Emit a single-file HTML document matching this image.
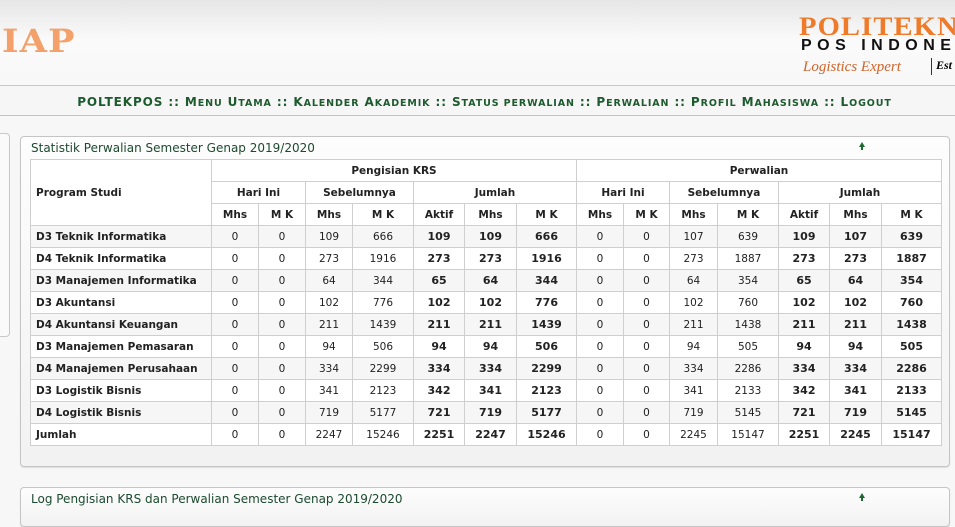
<!DOCTYPE html>
<html><head><meta charset="utf-8"><style>
*{margin:0;padding:0;box-sizing:border-box}
body{width:955px;height:501px;overflow:hidden;background:#f7f7f7;font-family:"DejaVu Sans","Liberation Sans",sans-serif;position:relative}
.hdr{position:absolute;left:0;top:0;width:955px;height:86px;background:linear-gradient(#e6e6e6 0,#ececec 12px,#fafafa 40px,#f8f8f8 86px);border-bottom:1px solid #c8c8c8}
.iap{position:absolute;left:2px;top:22px;font-family:"DejaVu Serif",serif;font-weight:bold;font-size:32px;color:#f4a06a;letter-spacing:1px;transform:scaleX(1.1);transform-origin:left}
.pol{position:absolute;left:799px;top:12px;font-family:"Liberation Serif",serif;font-weight:bold;font-size:26px;color:#ee7a2a;letter-spacing:1px;white-space:nowrap;transform:scaleX(1.1);transform-origin:left}
.pos{position:absolute;left:801px;top:37px;font-family:"Liberation Sans",sans-serif;font-weight:bold;font-size:16px;color:#111;letter-spacing:5.5px;white-space:nowrap}
.le{position:absolute;left:803px;top:59px;font-family:"Liberation Serif",serif;font-style:italic;font-size:15px;color:#d0642a;white-space:nowrap}
.est{position:absolute;left:931px;top:58px;border-left:1px solid #333;padding-left:4px;font-family:"Liberation Serif",serif;font-style:italic;font-size:12px;height:17px;font-weight:bold}
.nav{position:absolute;left:0;top:87px;width:955px;height:29px;background:#f6f6f6;border-bottom:1px solid #c4c4c4;text-align:center;font-size:12px;font-weight:bold;color:#1d5a2e;line-height:30px;letter-spacing:0.9px;padding-left:14px;white-space:nowrap}
.nav small{font-size:9.5px}
.lp{position:absolute;left:-5px;top:133px;width:15px;height:204px;border:1px solid #c8c8c8;border-radius:4px;background:#fafafa}
.panel{position:absolute;left:20px;width:930px;border:1px solid #c5c5c5;border-radius:4px;background:linear-gradient(#fdfdfd,#f2f2f2);box-shadow:0 1px 1px #ddd}
.ttl{position:absolute;left:10px;top:4px;font-size:12px;color:#1d4a30}
.arr{position:absolute;left:838px;top:5px;width:0;height:0;border-left:3px solid transparent;border-right:3px solid transparent;border-bottom:5px solid #1d6a2e}
.arr:after{content:"";position:absolute;left:-1px;top:5px;width:2px;height:3px;background:#1d6a2e}
table{position:absolute;left:9px;top:22px;border-collapse:collapse;font-size:10.5px;color:#222;background:#fff}
td,th{border:1px solid #cfcfcf;height:22px;text-align:center;padding:0}
th{font-weight:bold;font-size:10.5px}
td.p{text-align:left;padding-left:5px;font-weight:bold}
tbody tr:nth-child(odd){background:#f6f6f6}
td.b{font-weight:bold;font-size:11px}
</style></head><body>
<div class="hdr">
<div class="iap">IAP</div>
<div class="pol">POLITEKNIK</div>
<div class="pos">POS INDONESIA</div>
<div class="le">Logistics Expert</div>
<div class="est">Est</div>
</div>
<div class="nav">POLTEKPOS :: M<small>ENU</small> U<small>TAMA</small> :: K<small>ALENDER</small> A<small>KADEMIK</small> :: S<small>TATUS PERWALIAN</small> :: P<small>ERWALIAN</small> :: P<small>ROFIL</small> M<small>AHASISWA</small> :: L<small>OGOUT</small></div>
<div class="lp"></div>
<div class="panel" style="top:136px;height:331px">
<div class="ttl">Statistik Perwalian Semester Genap 2019/2020</div>
<div class="arr"></div>
<table>
<colgroup><col style="width:181px"><col style="width:47px"><col style="width:47px"><col style="width:47px"><col style="width:61px"><col style="width:51px"><col style="width:52px"><col style="width:60px"><col style="width:47px"><col style="width:46px"><col style="width:48px"><col style="width:61px"><col style="width:51px"><col style="width:52px"><col style="width:60px"></colgroup>
<thead>
<tr><th rowspan="3" style="text-align:left;padding-left:5px">Program Studi</th><th colspan="7">Pengisian KRS</th><th colspan="7">Perwalian</th></tr>
<tr><th colspan="2">Hari Ini</th><th colspan="2">Sebelumnya</th><th colspan="3">Jumlah</th><th colspan="2">Hari Ini</th><th colspan="2">Sebelumnya</th><th colspan="3">Jumlah</th></tr>
<tr><th>Mhs</th><th>M K</th><th>Mhs</th><th>M K</th><th>Aktif</th><th>Mhs</th><th>M K</th><th>Mhs</th><th>M K</th><th>Mhs</th><th>M K</th><th>Aktif</th><th>Mhs</th><th>M K</th></tr>
</thead>
<tbody>
<tr><td class="p">D3 Teknik Informatika</td><td>0</td><td>0</td><td>109</td><td>666</td><td class="b">109</td><td class="b">109</td><td class="b">666</td><td>0</td><td>0</td><td>107</td><td>639</td><td class="b">109</td><td class="b">107</td><td class="b">639</td></tr>
<tr><td class="p">D4 Teknik Informatika</td><td>0</td><td>0</td><td>273</td><td>1916</td><td class="b">273</td><td class="b">273</td><td class="b">1916</td><td>0</td><td>0</td><td>273</td><td>1887</td><td class="b">273</td><td class="b">273</td><td class="b">1887</td></tr>
<tr><td class="p">D3 Manajemen Informatika</td><td>0</td><td>0</td><td>64</td><td>344</td><td class="b">65</td><td class="b">64</td><td class="b">344</td><td>0</td><td>0</td><td>64</td><td>354</td><td class="b">65</td><td class="b">64</td><td class="b">354</td></tr>
<tr><td class="p">D3 Akuntansi</td><td>0</td><td>0</td><td>102</td><td>776</td><td class="b">102</td><td class="b">102</td><td class="b">776</td><td>0</td><td>0</td><td>102</td><td>760</td><td class="b">102</td><td class="b">102</td><td class="b">760</td></tr>
<tr><td class="p">D4 Akuntansi Keuangan</td><td>0</td><td>0</td><td>211</td><td>1439</td><td class="b">211</td><td class="b">211</td><td class="b">1439</td><td>0</td><td>0</td><td>211</td><td>1438</td><td class="b">211</td><td class="b">211</td><td class="b">1438</td></tr>
<tr><td class="p">D3 Manajemen Pemasaran</td><td>0</td><td>0</td><td>94</td><td>506</td><td class="b">94</td><td class="b">94</td><td class="b">506</td><td>0</td><td>0</td><td>94</td><td>505</td><td class="b">94</td><td class="b">94</td><td class="b">505</td></tr>
<tr><td class="p">D4 Manajemen Perusahaan</td><td>0</td><td>0</td><td>334</td><td>2299</td><td class="b">334</td><td class="b">334</td><td class="b">2299</td><td>0</td><td>0</td><td>334</td><td>2286</td><td class="b">334</td><td class="b">334</td><td class="b">2286</td></tr>
<tr><td class="p">D3 Logistik Bisnis</td><td>0</td><td>0</td><td>341</td><td>2123</td><td class="b">342</td><td class="b">341</td><td class="b">2123</td><td>0</td><td>0</td><td>341</td><td>2133</td><td class="b">342</td><td class="b">341</td><td class="b">2133</td></tr>
<tr><td class="p">D4 Logistik Bisnis</td><td>0</td><td>0</td><td>719</td><td>5177</td><td class="b">721</td><td class="b">719</td><td class="b">5177</td><td>0</td><td>0</td><td>719</td><td>5145</td><td class="b">721</td><td class="b">719</td><td class="b">5145</td></tr>
<tr><td class="p">Jumlah</td><td>0</td><td>0</td><td>2247</td><td>15246</td><td class="b">2251</td><td class="b">2247</td><td class="b">15246</td><td>0</td><td>0</td><td>2245</td><td>15147</td><td class="b">2251</td><td class="b">2245</td><td class="b">15147</td></tr>
</tbody></table>
</div>
<div class="panel" style="top:487px;height:40px">
<div class="ttl">Log Pengisian KRS dan Perwalian Semester Genap 2019/2020</div>
<div class="arr"></div>
</div>
</body></html>
